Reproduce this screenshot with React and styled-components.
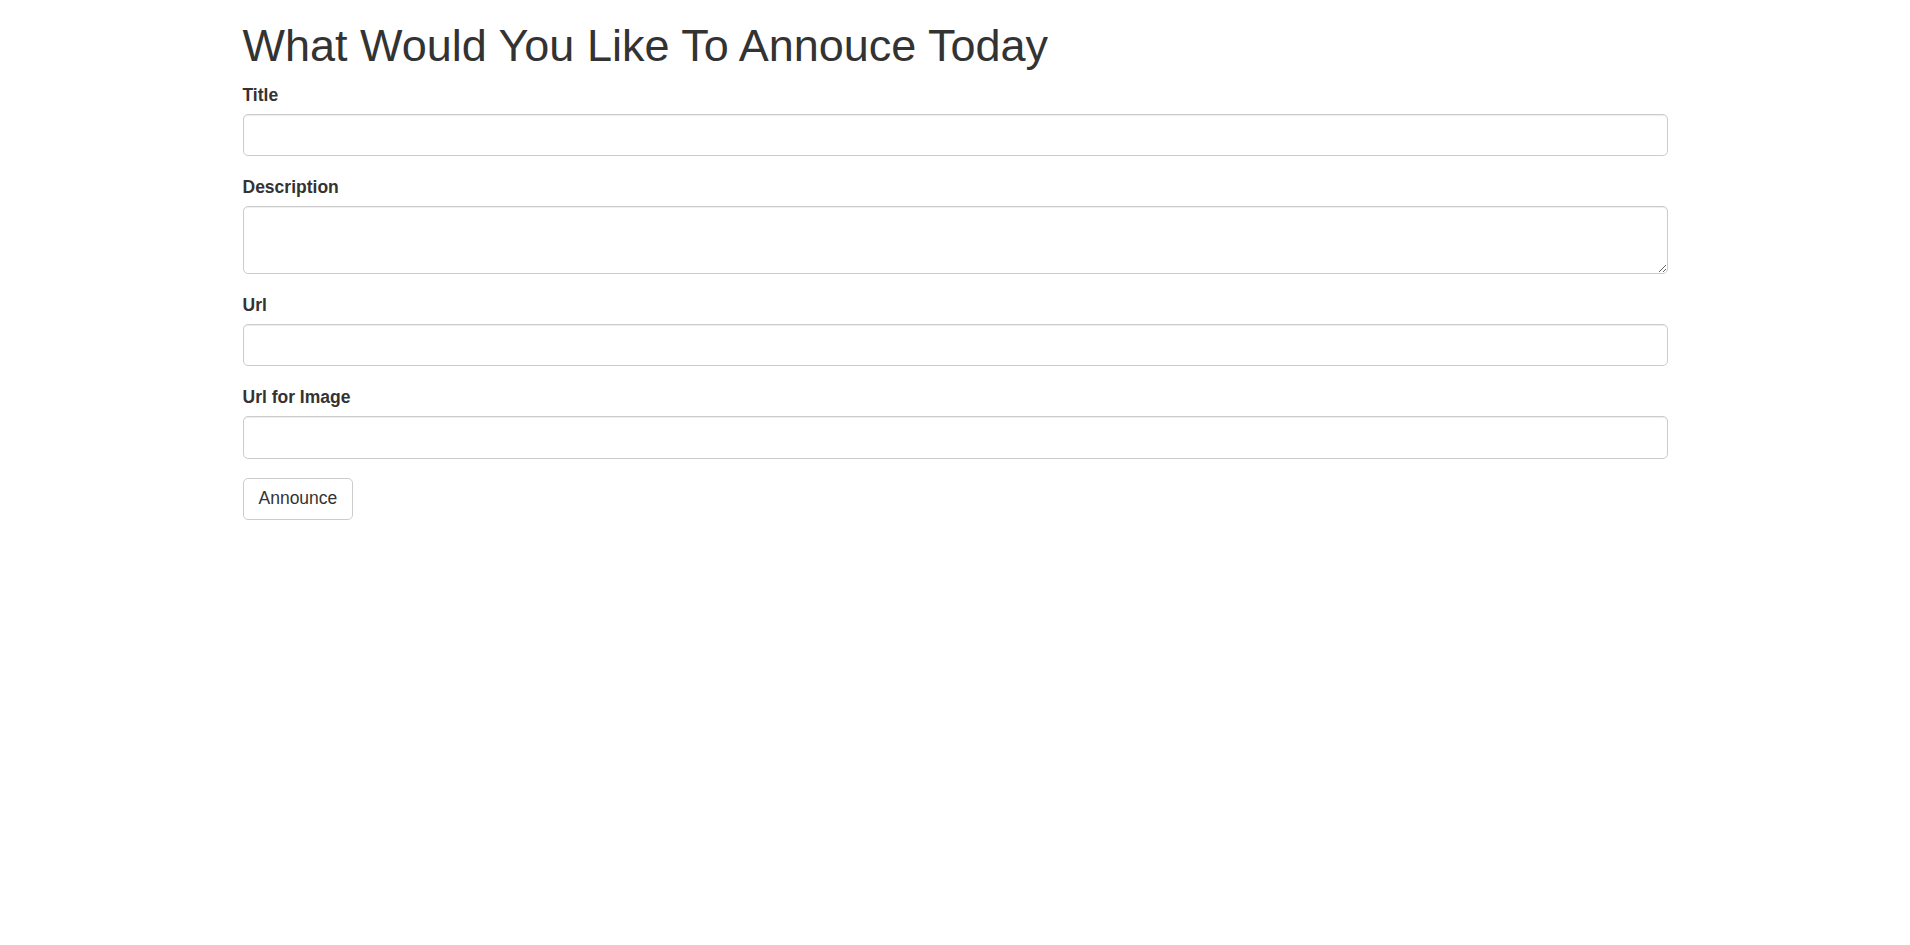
import styled, { createGlobalStyle } from "styled-components";

// Bootstrap 3 look, drawn at 125% scale
const s = (px) => `${px * 1.25}px`;

const Global = createGlobalStyle`
  html, body {
    margin: 0;
    background: #fff;
  }
  body {
    font-family: "Liberation Sans", Arial, Helvetica, sans-serif;
    font-size: ${s(14)};
    line-height: 1.42857143;
    color: #333;
  }
  * {
    box-sizing: border-box;
  }
`;

const Container = styled.div`
  width: ${s(1170)};
  margin: 0 auto;
  padding: 0 ${s(15)};
`;

const Heading = styled.h1`
  font-size: ${s(36)};
  font-weight: 500;
  line-height: 1.1;
  margin: ${s(16.5)} 0 ${s(10)};
  color: #333;
`;

const Form = styled.form`
  display: flex;
  flex-direction: column;
`;

const Group = styled.div`
  margin-bottom: ${s(15)};
`;

const Label = styled.label`
  display: inline-block;
  max-width: 100%;
  margin-bottom: ${s(5)};
  font-weight: 700;
`;

const fieldCss = `
  display: block;
  width: 100%;
  padding: ${s(6)} ${s(12)};
  font-family: inherit;
  font-size: ${s(14)};
  line-height: 1.42857143;
  color: #555;
  background: #fff;
  border: 1px solid #ccc;
  border-radius: ${s(4)};
  box-shadow: inset 0 1px 1px rgba(0, 0, 0, 0.075);
  outline: none;
`;

const Input = styled.input`
  ${fieldCss}
  height: ${s(34)};
`;

const TextArea = styled.textarea`
  ${fieldCss}
  height: ${s(54)};
  resize: vertical;
`;

const Button = styled.button`
  align-self: flex-start;
  display: inline-block;
  padding: ${s(6)} ${s(12)};
  font-family: inherit;
  font-size: ${s(14)};
  line-height: 1.42857143;
  color: #333;
  background: #fff;
  border: 1px solid #ccc;
  border-radius: ${s(4)};
  cursor: pointer;
`;

const fields = [
  { id: "title", label: "Title" },
  { id: "description", label: "Description", multiline: true },
  { id: "url", label: "Url" },
  { id: "image", label: "Url for Image" },
];

export default function App() {
  return (
    <>
      <Global />
      <Container>
        <Heading>What Would You Like To Annouce Today</Heading>
        <Form onSubmit={(e) => e.preventDefault()}>
          {fields.map((f) => (
            <Group key={f.id}>
              <Label htmlFor={f.id}>{f.label}</Label>
              {f.multiline ? <TextArea id={f.id} /> : <Input id={f.id} type="text" />}
            </Group>
          ))}
          <Button type="submit">Announce</Button>
        </Form>
      </Container>
    </>
  );
}
